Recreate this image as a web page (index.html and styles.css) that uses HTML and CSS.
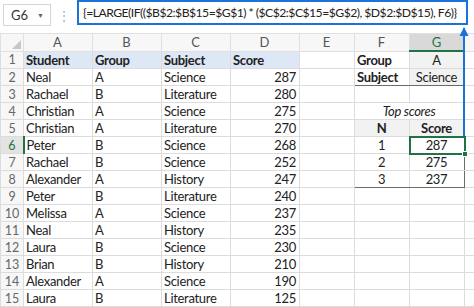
FILE: index.html
```html
<!DOCTYPE html>
<html lang="en">
<head>
    <meta charset="UTF-8">
    <title>Top scores - LARGE IF</title>
    <link rel="stylesheet" href="styles.css">
</head>
<body>
    <!-- Formula bar -->
    <div class="formula-bar">
        <div class="name-box"><span>G6</span><span class="drop">&#9660;</span></div>
        <div class="dots">&#8942;</div>
        <div class="formula">{=LARGE(IF(($B$2:$B$15=$G$1) * ($C$2:$C$15=$G$2), $D$2:$D$15), F6)}</div>
    </div>

    <!-- Sheet -->
    <div class="sheet">
        <table class="grid">
            <colgroup>
                <col class="c-hdr"><col class="c-a"><col class="c-b"><col class="c-c"><col class="c-d"><col class="c-e"><col class="c-f"><col class="c-g"><col class="c-h">
            </colgroup>
            <thead>
                <tr class="col-hdr">
                    <th class="corner"></th><th>A</th><th>B</th><th>C</th><th>D</th><th>E</th><th>F</th><th class="active">G</th><th></th>
                </tr>
            </thead>
            <tbody>
                <tr><th>1</th><td class="head">Student</td><td class="head">Group</td><td class="head">Subject</td><td class="head">Score</td><td></td><td class="crit bt bl">Group</td><td class="val bt br">A</td><td></td></tr>
                <tr><th>2</th><td>Neal</td><td>A</td><td>Science</td><td class="num">287</td><td></td><td class="crit bb bl">Subject</td><td class="val bb br">Science</td><td></td></tr>
                <tr><th>3</th><td>Rachael</td><td>B</td><td>Literature</td><td class="num">280</td><td></td><td></td><td></td><td></td></tr>
                <tr><th>4</th><td>Christian</td><td>A</td><td>Science</td><td class="num">275</td><td></td><td class="caption" colspan="2">Top scores</td><td></td></tr>
                <tr><th>5</th><td>Christian</td><td>A</td><td>Literature</td><td class="num">270</td><td></td><td class="th bt bl">N</td><td class="th bt br">Score</td><td></td></tr>
                <tr><th class="active">6</th><td>Peter</td><td>B</td><td>Science</td><td class="num">268</td><td></td><td class="ctr bl">1</td><td class="ctr br selected">287<span class="handle"></span></td><td></td></tr>
                <tr><th>7</th><td>Rachael</td><td>B</td><td>Science</td><td class="num">252</td><td></td><td class="ctr bl">2</td><td class="ctr br">275</td><td></td></tr>
                <tr><th>8</th><td>Alexander</td><td>A</td><td>History</td><td class="num">247</td><td></td><td class="ctr bb bl">3</td><td class="ctr bb br">237</td><td></td></tr>
                <tr><th>9</th><td>Peter</td><td>B</td><td>Literature</td><td class="num">240</td><td></td><td></td><td></td><td></td></tr>
                <tr><th>10</th><td>Melissa</td><td>A</td><td>Science</td><td class="num">237</td><td></td><td></td><td></td><td></td></tr>
                <tr><th>11</th><td>Neal</td><td>A</td><td>History</td><td class="num">235</td><td></td><td></td><td></td><td></td></tr>
                <tr><th>12</th><td>Laura</td><td>B</td><td>Science</td><td class="num">230</td><td></td><td></td><td></td><td></td></tr>
                <tr><th>13</th><td>Brian</td><td>B</td><td>History</td><td class="num">210</td><td></td><td></td><td></td><td></td></tr>
                <tr><th>14</th><td>Alexander</td><td>A</td><td>Science</td><td class="num">190</td><td></td><td></td><td></td><td></td></tr>
                <tr><th>15</th><td>Laura</td><td>B</td><td>Literature</td><td class="num">125</td><td></td><td></td><td></td><td></td></tr>
            </tbody>
        </table>

        <!-- arrow from G6 up to the formula -->
        <svg class="arrow" width="12" height="112" viewBox="0 0 12 112">
            <line x1="6" y1="4" x2="6" y2="112" stroke="#1a73d9" stroke-width="2"/>
            <path d="M1.5 12 L6 3 L10.5 12 Z" fill="#1a73d9"/>
        </svg>
    </div>
</body>
</html>
```

FILE: styles.css
```css
* { margin: 0; padding: 0; box-sizing: border-box; }
body { width: 474px; height: 307px; overflow: hidden; background: #fff; font-family: 'Lato', 'Liberation Sans', sans-serif; color: #222; }

.formula-bar { display: flex; align-items: center; height: 33px; padding: 0 6px 6px 3px; }
.name-box { display: flex; align-items: center; justify-content: space-between; width: 48px; height: 22px; margin-top: 3px; border: 1px solid #d6d6d6; padding: 0 6px 0 7px; font-size: 13px; color: #333; }
.name-box .drop { font-size: 7px; color: #666; }
.dots { width: 26px; text-align: center; color: #aaa; font-size: 12px; margin-top: 4px; }
.formula { flex: 1; height: 25px; margin-top: -2px; border: 2px solid #1a73d9; padding: 3px 0 0 4px; font-size: 12.2px; letter-spacing: -0.52px; color: #222; white-space: nowrap; overflow: hidden; }

.sheet { position: relative; }
.grid { border-collapse: collapse; table-layout: fixed; width: 474px; font-size: 13px; letter-spacing: -0.3px; }
.c-hdr { width: 23px; }
.c-a, .c-b, .c-c, .c-d { width: 69px; }
.c-e { width: 55px; }
.c-f { width: 55px; }
.c-g { width: 55px; }
.c-h { width: 10px; }

.grid td, .grid th { height: 17px; border: 1px solid #dcdcdc; padding: 1px 3px 0 2px; white-space: nowrap; overflow: visible; line-height: 15px; }
.grid th { font-weight: normal; color: #666; background: #f7f7f7; letter-spacing: 0; }
.col-hdr th { text-align: center; border-color: #e0e0e0; color: #555; font-size: 13px; }
.col-hdr th.active { background: #d9d9d9; color: #217346; border-bottom: 2px solid #217346; }
.grid tbody th { text-align: center; font-size: 12.5px; padding: 0; }
.grid tbody th.active { background: #e3e3e3; color: #217346; border-right: 2px solid #217346; }
.corner { position: relative; }
.corner::after { content: ""; position: absolute; right: 2px; bottom: 2px; border-style: solid; border-width: 0 0 9px 9px; border-color: transparent transparent #c8c8c8 transparent; }

.head { background: #dde7f5; font-weight: bold; }
.num { text-align: right; }
.crit { font-weight: bold; }
.val { text-align: center; background: #f2f2f2; }
.caption { text-align: center; font-style: italic; }
.th { text-align: center; font-weight: bold; background: #f2f2f2; }
.ctr { text-align: center; }

.bt { border-top: 1px solid #6b6b6b !important; }
.bb { border-bottom: 1px solid #6b6b6b !important; }
.bl { border-left: 1px solid #6b6b6b !important; }
.br { border-right: 1px solid #6b6b6b !important; }

.selected { position: relative; outline: 2px solid #217346; outline-offset: -1px; }
.handle { position: absolute; right: -4px; bottom: -4px; width: 6px; height: 6px; background: #217346; border: 1px solid #fff; }

.arrow { position: absolute; left: 458px; top: -9px; }
```
